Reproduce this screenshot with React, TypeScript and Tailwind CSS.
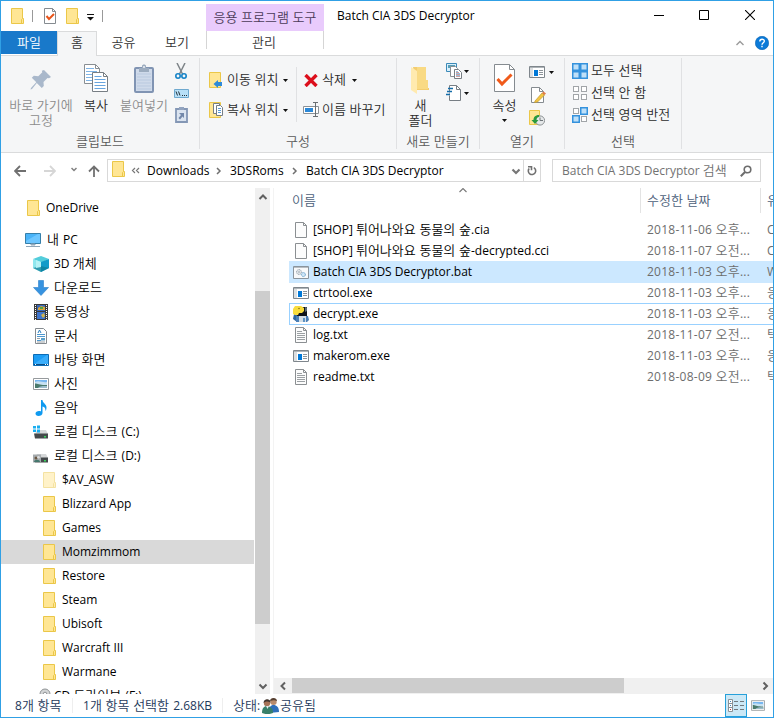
import React from "react";

type P = { className?: string; children?: React.ReactNode };

// Hangul and Latin runs are set in different families, so their sizes look even.
function T({ children, className = "" }: { children: string; className?: string }) {
  const runs = children.split(/([\uAC00-\uD7A3]+(?: [\uAC00-\uD7A3]+)*)/).filter(Boolean);
  return (
    <span className={"whitespace-pre leading-[16px] " + className}>
      {runs.map((r, i) =>
        /[\uAC00-\uD7A3]/.test(r) ? (
          <span key={i} className="font-['Noto_Sans_CJK_KR',sans-serif] text-[13px] font-[350] leading-none [word-spacing:0.8px]">{r}</span>
        ) : (
          <span key={i} className={"text-[12px] leading-none " + (r.startsWith(" ") ? "[word-spacing:1px]" : "")}>{r}</span>
        )
      )}
    </span>
  );
}

function Svg({ w, h, className = "", children }: P & { w: number; h: number }) {
  return (
    <svg width={w} height={h} viewBox={`0 0 ${w} ${h}`} className={"block shrink-0 " + className} fill="none">
      {children}
    </svg>
  );
}

const Folder = ({ className = "" }: P) => (
  <Svg w={13} h={16} className={className}>
    <path d="M.5.5h11v10h1v5H.5z" fill="#ffe694" stroke="#ebc748" />
    <path d="M10.5 15.5v-4l1-1" stroke="#ebc748" />
  </Svg>
);
const Caret = ({ className = "" }: P) => (
  <Svg w={5} h={3} className={className}><path d="M0 0h5L2.5 3z" fill="#111" /></Svg>
);
const Doc = ({ lines = false }: { lines?: boolean }) => (
  <Svg w={12} h={16}>
    <path d="M.5.5h8l3 3v12H.5z" fill="#fcfcfc" stroke="#8b8f92" />
    <path d="M8.5.5v3h3" stroke="#8b8f92" />
    {lines && <path d="M2 4.5h5M2 6.5h8M2 8.5h8M2 10.5h8M2 12.5h8" stroke="#9ba0a3" />}
  </Svg>
);
const Exe = () => (
  <Svg w={16} h={12}>
    <path d="M.5.5h15v11H.5z" fill="#fff" stroke="#7f868c" />
    <path d="M1 1.5h14" stroke="#aeb4b8" />
    <path d="M1 2h3v9H1z" fill="#dcdfe1" />
    <path d="M5 4h4v6H5z" fill="#0078d7" />
    <path d="M10 4.5h4M10 6.5h4M10 8.5h4" stroke="#8d949a" />
  </Svg>
);
const Bat = () => (
  <Svg w={16} h={13}>
    <path d="M.5.5h15v12H.5z" fill="#f8f9fa" stroke="#8a949c" />
    <path d="M1 1.5h14" stroke="#b7bdc2" />
    <circle cx="6" cy="6" r="2.4" stroke="#8b98a3" strokeDasharray="1.2 .5" />
    <circle cx="6" cy="6" r="1" stroke="#8b98a3" strokeWidth=".6" />
    <circle cx="10.4" cy="8.6" r="2" fill="#cfe6f7" stroke="#6ea4cc" strokeDasharray="1.2 .5" />
  </Svg>
);
const Python = () => (
  <Svg w={16} h={16}>
    <path d="M1 8l3 1v7l-4-3z" fill="#2e65a0" />
    <path d="M6 1h8v9H4V6z" fill="#10141a" />
    <path d="M12 1l2 .5V5l-2 1z" fill="#5c6c78" />
    <path d="M3 10h12l1 4-2 2H3z" fill="#4a80b8" />
    <path d="M6 10h7v6H6z" fill="#d3dee6" />
    <path d="M10 12h2v4h-2z" fill="#5d93c4" />
    <path d="M0 3l2-3h6l3 2v3L9 7H6L5 9H2L0 8z" fill="#f8dc3c" />
    <circle cx="6" cy="2.500" r=".8" fill="#8a7210" />
  </Svg>
);
const Picture = ({ w = 16, h = 12 }: { w?: number; h?: number }) => (
  <svg width={w} height={h} viewBox="0 0 16 12" className="block shrink-0" fill="none">
    <path d="M.5.5h15v11H.5z" fill="#fff" stroke="#969a9d" />
    <path d="M2 2h12v4H2z" fill="#76b6f0" />
    <path d="M2 4c4-2 8 1 12 0v3H2z" fill="#c7e1f2" />
    <path d="M2 5.500c3 0 5 2 12 1.500v3H2z" fill="#4a7a6c" />
    <path d="M6 9c3-1.500 5-1 8-1v2H5z" fill="#9bbccb" />
  </svg>
);

const Pin = () => (
  <Svg w={22} h={22}>
    <path d="M14 1l7 7-2 1.3-1.5-.3-4 4 .3 4-2 2-5-5L2 20l-1.500.5L1 19l5.300-5.700-4.500-4.500 2-2 4.500.5 4-4-.5-1.500z" fill="#a9b8cb" />
  </Svg>
);
const Copy = () => (
  <Svg w={25} h={28}>
    <path d="M.5.5h11l4 4v15H.5z" fill="#fff" stroke="#888e93" />
    <path d="M11.500.5v4h4" stroke="#888e93" />
    <path d="M2 4.500h8M2 7.500h11M2 10.500h11M2 13.500h11M2 16.500h11" stroke="#7eb4e6" />
    <path d="M8.500 8.500h11l4 4v15h-15z" fill="#fff" stroke="#777e84" />
    <path d="M19.500 8.500v4h4" stroke="#777e84" />
    <path d="M10.500 12.500h7M10.500 15.500h11M10.500 18.500h11M10.500 21.500h11M10.500 24.500h11" stroke="#68a5df" />
  </Svg>
);
const Paste = () => (
  <Svg w={20} h={29}>
    <rect x="1" y="4" width="18" height="24" rx="1" fill="#cfdaea" stroke="#8094b3" strokeWidth="2" />
    <path d="M3 10h14M3 13h14M3 16h14M3 19h14M3 22h14M3 25h14" stroke="#b9c9df" />
    <path d="M5 4h3V2c0-2 4-2 4 0v2h3v4H5z" fill="#9cacbf" />
    <circle cx="10" cy="3" r="1" fill="#eef2f7" />
  </Svg>
);
const Scissors = () => (
  <Svg w={12} h={17}>
    <path d="M2 0l5.500 11M10 0L4.500 11" stroke="#7e8589" strokeWidth="1.500" />
    <circle cx="3" cy="13" r="2.200" stroke="#1683c7" strokeWidth="1.600" />
    <circle cx="9" cy="13" r="2.200" stroke="#1683c7" strokeWidth="1.600" />
  </Svg>
);
const PathIcon = () => (
  <Svg w={15} h={9}>
    <path d="M.5.5h14v8H.5z" fill="#b8e0f8" stroke="#6fa9cf" />
    <path d="M2 2.500l1.500 4M4.500 2.500l1.500 4" stroke="#22303a" />
    <path d="M8 6.500h1M10 6.500h1M12 6.500h1" stroke="#22303a" />
  </Svg>
);
const PasteLink = () => (
  <Svg w={13} h={17}>
    <path d="M1 3h11v13H1z" fill="#dbe4f0" stroke="#8497b5" strokeWidth="1.800" />
    <path d="M4 1h5v3H4z" fill="#93a4bf" />
    <path d="M4 7h5v5L7.500 10.500 5 13.500 3.500 12 6 9z" fill="#7388aa" />
  </Svg>
);
const MoveTo = () => (
  <Svg w={14} h={16}>
    <path d="M.5.5h11v15H.5z" fill="#ffe694" stroke="#ebc748" />
    <path d="M13 10v4h-4v2l-4.500-4 4.500-4v2z" fill="#2f8ad8" />
  </Svg>
);
const CopyTo = () => (
  <Svg w={14} h={16}>
    <path d="M.5.500h11v15H.5z" fill="#ffe694" stroke="#ebc748" />
    <path d="M4.500 1.500h6v10h-6z" fill="#fff" stroke="#777e84" />
    <path d="M7.500 3.500h4l2 2v8h-6z" fill="#fff" stroke="#777e84" />
    <path d="M9 6.500h3M9 8.500h3M9 10.500h3" stroke="#5b9bd5" />
  </Svg>
);
const Delete = () => (
  <Svg w={14} h={13}><path d="M1.500 1l11 11M12.500 1l-11 11" stroke="#dc0f1c" strokeWidth="3.400" /></Svg>
);
const Rename = () => (
  <Svg w={16} h={16}>
    <path d="M.5 4.500h15v7H.5z" fill="#fff" stroke="#8b9196" />
    <path d="M2 6h8v4H2z" fill="#2b88d8" />
    <path d="M10 .5h5M10 14.500h5M12.500 1v13" stroke="#6a6f73" />
  </Svg>
);
const BigFolder = () => (
  <Svg w={19} h={28}>
    <path d="M2 1h13v13h1v8h2v2H6v2z" fill="#f3cd70" />
    <path d="M6 1h9v13h2v9H6z" fill="#f9da84" />
    <path d="M0 1l6 4v23l-6-4z" fill="#ffeaaf" />
  </Svg>
);
const NewItem = () => (
  <Svg w={16} h={16}>
    <path d="M.5.500h10v8H.5z" fill="#d8effc" stroke="#3c8ab8" />
    <path d="M2 2h7v3H2z" fill="#559fb8" />
    <path d="M4.500 3.500h5l2 2v8h-7z" fill="#fff" stroke="#8a9095" />
    <path d="M8.500 6.500h4l3 3v6h-7z" fill="#fff" stroke="#777e84" />
    <path d="M10 9.500h3M10 11.500h4M10 13.500h4" stroke="#d0a0a0" />
    <path d="M10 8.500h2M10 10.500h4M10 12.500h4" stroke="#98bfdc" />
  </Svg>
);
const EasyAccess = () => (
  <Svg w={15} h={16}>
    <path d="M3.500.500h7l4 4v11h-11z" fill="#fff" stroke="#777e84" />
    <path d="M10.500.500v4h4" stroke="#777e84" />
    <path d="M3 7v4" stroke="#f5f6f7" />
    <path d="M2 3.500h5M1 6.500h5M0 9.500h4" stroke="#146ca8" strokeWidth="1.300" />
  </Svg>
);
const Props = () => (
  <Svg w={21} h={28}>
    <path d="M.5.500h15l5 5v22H.5z" fill="#fff" stroke="#858b90" />
    <path d="M15.500.500v5h5" stroke="#858b90" />
    <path d="M3.500 15l4.500 5 9.500-9.500" stroke="#f05a1a" strokeWidth="3" />
  </Svg>
);
const Edit = () => (
  <Svg w={15} h={16}>
    <path d="M.5.500h8l4 4v11H.5z" fill="#fff" stroke="#858b90" />
    <path d="M8.500.500v4h4" stroke="#858b90" />
    <path d="M4 14l7-8 2.500 2-7 7-3 .5z" fill="#f4c542" stroke="#bd9a33" strokeWidth=".7" />
    <path d="M11 6l1.500-1.500 2.500 2L13.500 8z" fill="#e07b4a" />
  </Svg>
);
const History = () => (
  <Svg w={16} h={16}>
    <path d="M.5.500h10v14H.5z" fill="#ffe694" stroke="#ebc748" />
    <circle cx="11" cy="10.500" r="4.600" fill="#e5e8e9" stroke="#8d9294" />
    <path d="M11 7.500v3h3" stroke="#70777b" />
    <path d="M10 5C6 5 4.500 7.500 4.500 10H2.500L6 14l3.500-4h-2c0-2 1-3 2.500-3z" fill="#2c9a3d" />
  </Svg>
);
function Cells({ on }: { on: boolean[] }) {
  return (
    <Svg w={16} h={16}>
      {on.map((o, i) => {
        const x = (i % 2) * 8;
        const y = Math.floor(i / 2) * 8;
        return o ? (
          <rect key={i} x={x + 0.75} y={y + 0.75} width="6.500" height="6.500" fill="#bfe0f8" stroke="#3492dd" strokeWidth="1.500" />
        ) : (
          <rect key={i} x={x + 1.5} y={y + 1.5} width="5" height="5" fill="#fff" stroke="#a1a5a8" />
        );
      })}
    </Svg>
  );
}
const Chevron = ({ d, color = "#606060", sw = 2 }: { d: string; color?: string; sw?: number }) => (
  <Svg w={10} h={10}><path d={d} stroke={color} strokeWidth={sw} /></Svg>
);
const UP = "M1.500 7l3.500-3.500L8.500 7";
const DOWN = "M1.500 3.500L5 7l3.500-3.500";
const LEFT = "M7 1.500L3.500 5 7 8.500";
const RIGHT = "M3.500 1.500L7 5 3.500 8.500";

const MyPc = () => (
  <Svg w={16} h={16}>
    <path d="M.5 1.500h15v10H.5z" fill="#49b3f8" stroke="#367fa9" />
    <path d="M1 9L13 2h2v9H1z" fill="#6dc6ff" />
    <path d="M6 12h4v1H6zM1 14.500h14" fill="#9fb7c7" stroke="#8fa5b7" />
  </Svg>
);
const Cube = () => (
  <Svg w={16} h={16}>
    <path d="M8 0l8 3-8 4-8-4z" fill="#53cddb" />
    <path d="M0 3l8 3v10l-8-4z" fill="#8fe7ee" />
    <path d="M16 3L8 6v10l8-4z" fill="#129cc9" />
    <path d="M8 10l8 2-8 4-8-4z" fill="#0d7f98" opacity=".75" />
    <path d="M3 4l5 2v5l-5 1z" fill="#b5f2f5" />
  </Svg>
);
const Down = () => (
  <Svg w={16} h={16}><path d="M5.500.500h5v7h5L8 15.500.500 7.500h5z" fill="#3793e0" stroke="#2b7fc9" strokeWidth=".6" /></Svg>
);
const Film = () => (
  <Svg w={14} h={16}>
    <path d="M0 0h14v16H0z" fill="#3a3a3a" />
    <path d="M3 1h8v6H3z" fill="#3968b8" /><path d="M3 8h8v7H3z" fill="#3f75cc" />
    <path d="M4 4l3-2 4 1v3H4z" fill="#d8a53b" /><path d="M6 3h3v2H6z" fill="#4da24b" /><path d="M7 11l3-2 1 3-2 2z" fill="#d3b54b" />
    <path d="M1.500 1v15M12.500 1v15" stroke="#fff" strokeDasharray="1 1" />
  </Svg>
);
const DocIcon = () => (
  <Svg w={12} h={16}>
    <path d="M.5.500h8l3 3v12H.5z" fill="#fff" stroke="#858b90" />
    <path d="M2 6.500h8M2 8.500h8M2 12.500h4" stroke="#4d98d0" /><path d="M3 5l1.500-3L6 5" stroke="#2a7fc0" />
    <path d="M2 10.500h3M2 14h8" stroke="#9ba0a4" /><path d="M6 10h4v2.500H6z" fill="#5b9fc8" />
  </Svg>
);
const Desktop = () => (
  <Svg w={16} h={12}>
    <path d="M.5.500h15v11H.5z" fill="#1c9df5" stroke="#0d6cb5" />
    <path d="M1 10L14 1h1v9H1z" fill="#3badfa" />
    <path d="M1 10.500h14" stroke="#0a4d85" /><path d="M2 10.500h1M12 10.500h1M14 10.500h1" stroke="#fff" />
  </Svg>
);
const Music = () => (
  <Svg w={12} h={16}>
    <path d="M6 0h1.500c0 3 4 4 4 7.500 0 1.500-.5 3-1 3.500 0-3-1-4-3-4.500V13c0 2-2 3-4 3S.5 15 .5 13.500 2 11 4 11c1 0 1.500.200 2 .4z" fill="#0f9af0" />
  </Svg>
);
const Disk = ({ win = false }: { win?: boolean }) => (
  <Svg w={16} h={14}>
    <path d="M4 5h9l2 4H2z" fill="#d6d8d9" />
    <path d="M1 8.500h14v5H2z" fill="#45494b" />
    <path d="M11 11h2v1.500h-2z" fill="#36d45a" />
    {win ? (
      <path d="M0 1h3v2.500H0zM4 .5h3v3H4zM0 4.500h3V7H0zM4 4.500h3v3H4z" fill="#19aef0" />
    ) : (
      <>
        <path d="M0 5.500h8v8H0z" fill="#a5aaad" />
        <path d="M1 13c0-3 6-3 6 0z" fill="#44776d" /><circle cx="3" cy="9" r="1.500" fill="#6b5844" /><circle cx="5.500" cy="8.200" r="1.300" fill="#ddd" />
      </>
    )}
  </Svg>
);
const Cd = () => (
  <Svg w={12} h={16}>
    <circle cx="6" cy="6" r="5" fill="#d3d5d6" stroke="#909496" /><circle cx="6" cy="6" r="1.800" fill="#fff" stroke="#909496" />
  </Svg>
);
const People = () => (
  <Svg w={17} h={16}>
    <circle cx="11.500" cy="3.800" r="3.200" fill="#b88b6c" /><path d="M8 3c0-4 7-4 7 0-2-1-4-1-7 0z" fill="#564032" />
    <path d="M7 15c0-6 1.500-8 4.500-8S17 9 17 14z" fill="#2f6fba" />
    <circle cx="5" cy="5" r="3.200" fill="#a87458" /><path d="M1.500 5c0-5 7-5 7-.5-2-1-4-2-7 .5z" fill="#403630" />
    <path d="M0 15c0-5 2-7 5-7s6 2 6 7c-3 1.500-8 1.500-11 0z" fill="#38806a" />
    <path d="M4 8l1.500 3L7 8z" fill="#e5eaed" />
  </Svg>
);

function Group({ w, label, children }: { w: string; label: string; children: React.ReactNode }) {
  return (
    <div className={"relative flex shrink-0 flex-col " + w}>
      <div className="flex h-[78px] shrink-0">{children}</div>
      <div className="flex h-[16px] justify-center pr-px text-[#5a5a5a]"><T>{label}</T></div>
      <div className="absolute right-0 top-[2px] h-[91px] w-px bg-[#e0e1e3]" />
    </div>
  );
}

function Big({ w, icon, lines, className = "" }: { w: string; icon: React.ReactNode; lines: string[]; className?: string }) {
  return (
    <div className={"flex shrink-0 flex-col items-center " + w + " " + className}>
      <div className="flex h-[42px] flex-col items-center pt-[8px]">{icon}</div>
      {lines.map((l) => <T key={l} className="-mb-px">{l}</T>)}
    </div>
  );
}

const files: [string, string, string, React.ReactNode][] = [
  ["[SHOP] 튀어나와요 동물의 숲.cia", "2018-11-06 오후...", "CIA", <Doc />],
  ["[SHOP] 튀어나와요 동물의 숲-decrypted.cci", "2018-11-07 오전...", "CCI", <Doc />],
  ["Batch CIA 3DS Decryptor.bat", "2018-11-03 오후...", "Windows", <Bat />],
  ["ctrtool.exe", "2018-11-03 오후...", "응용", <Exe />],
  ["decrypt.exe", "2018-11-03 오후...", "응용", <Python />],
  ["log.txt", "2018-11-07 오전...", "텍스트", <Doc lines />],
  ["makerom.exe", "2018-11-03 오후...", "응용", <Exe />],
  ["readme.txt", "2018-08-09 오전...", "텍스트", <Doc lines />],
];

const tree: [string, React.ReactNode][] = [
  ["3D 개체", <Cube />], ["다운로드", <Down />], ["동영상", <Film />], ["문서", <DocIcon />],
  ["바탕 화면", <Desktop />], ["사진", <Picture />], ["음악", <Music />],
  ["로컬 디스크 (C:)", <Disk win />], ["로컬 디스크 (D:)", <Disk />],
];
const folders = ["$AV_ASW", "Blizzard App", "Games", "Momzimmom", "Restore", "Steam", "Ubisoft", "Warcraft III", "Warmane"];

function TitleBar() {
  return (
    <div className="flex h-[54px] shrink-0">
      <div className="flex w-[205px] shrink-0 flex-col">
        <div className="flex h-[30px] items-center pl-[10px]">
          <Folder />
          <div className="ml-[8px] h-[12px] w-px bg-[#999]" />
          <Svg w={12} h={16} className="ml-[11px]">
            <path d="M.5.500h8l3 3v12H.5z" fill="#fff" stroke="#858b90" /><path d="M8.500.500v3h3" stroke="#858b90" />
            <path d="M2.500 8l2.500 3 5-5" stroke="#e8541a" strokeWidth="2" />
          </Svg>
          <Folder className="ml-[10px]" />
          <Svg w={7} h={7} className="ml-[8px] mt-[3px]"><path d="M0 .5h7" stroke="#111" /><path d="M0 3h7L3.500 6.500z" fill="#111" /></Svg>
          <div className="ml-[8px] h-[12px] w-px bg-[#999]" />
        </div>
        <div className="flex h-[24px] text-[#333]">
          <div className="flex h-[23px] w-[56px] justify-center bg-[#1979ca] pt-[4px] text-white"><T>파일</T></div>
          <div className="z-10 -mr-px flex h-[25px] w-[40px] justify-center border border-b-0 border-[#dadbdc] bg-[#f5f6f7] pt-[3px]"><T>홈</T></div>
          <div className="flex w-[55px] justify-center pt-[4px]"><T>공유</T></div>
          <div className="flex w-[52px] justify-center pt-[4px]"><T>보기</T></div>
        </div>
      </div>
      <div className="mt-[3px] w-[118px] shrink-0">
        <div className="flex h-[27px] items-center justify-center bg-[#e9cbfc] text-[#4a3a58]"><T>응용 프로그램 도구</T></div>
        <div className="flex h-[18px] justify-center border-x border-[#d5d5d5] pr-[2px] pt-[4px] text-[#333]"><T>관리</T></div>
      </div>
      <div className="flex flex-1 flex-col">
        <div className="flex h-[30px] items-start">
          <T className="ml-[13px] mt-[7px] flex-1">Batch CIA 3DS Decryptor</T>
          <Svg w={10} h={11} className="mr-[35px] mt-[9px]"><path d="M0 5.500h10" stroke="#000" /></Svg>
          <Svg w={10} h={10} className="mr-[36px] mt-[9px]"><path d="M.5.500h9v9h-9z" stroke="#000" /></Svg>
          <Svg w={10} h={10} className="mr-[18px] mt-[9px]"><path d="M0 0l10 10M10 0L0 10" stroke="#000" strokeWidth="1.100" /></Svg>
        </div>
        <div className="flex h-[24px] items-center justify-end pr-[4px]">
          <Chevron d={UP} color="#9a9a9a" sw={1.4} />
          <Svg w={14} h={14} className="ml-[10px]"><circle cx="7" cy="7" r="6.700" fill="#0b7ad8" stroke="#0861ae" strokeWidth=".6" />
            <path d="M4.800 5.500c0-3 4.700-2.800 4.500-.2C9.200 6.800 7 6.800 7 8.700M7 9.800v1.500" stroke="#fff" strokeWidth="1.400" />
          </Svg>
        </div>
      </div>
    </div>
  );
}

function Ribbon() {
  return (
    <div className="flex h-[98px] shrink-0 border-y border-[#dadbdc] bg-[#f5f6f7] text-[#2b2b2b]">
      <Group w="w-[199px]" label="클립보드">
        <Big w="w-[80px]" className="text-[#8c8c8c]" icon={<div className="pt-[5px]"><Pin /></div>} lines={["바로 가기에", "고정"]} />
        <Big w="w-[30px]" icon={<div className="pl-px"><Copy /></div>} lines={["복사"]} />
        <Big w="w-[66px]" className="text-[#8c8c8c]" icon={<Paste />} lines={["붙여넣기"]} />
        <div className="-ml-[4px] flex w-[16px] flex-col items-center pt-[7px]">
          <Scissors />
          <div className="mt-[9px]"><PathIcon /></div>
          <div className="mt-[8px]"><PasteLink /></div>
        </div>
      </Group>
      <Group w="w-[197px]" label="구성">
        <div className="flex w-[96px] flex-col pl-[9px] pt-[16px]">
          <div className="flex h-[16px] items-center"><MoveTo /><T className="ml-[4px]">이동 위치</T><Caret className="ml-[4px]" /></div>
          <div className="mt-[14px] flex h-[16px] items-center"><CopyTo /><T className="ml-[4px]">복사 위치</T><Caret className="ml-[4px]" /></div>
        </div>
        <div className="mt-[11px] h-[55px] w-px bg-[#e0e1e3]" />
        <div className="flex flex-col pl-[7px] pt-[16px]">
          <div className="flex h-[16px] items-center"><Delete /><T className="ml-[4px]">삭제</T><Caret className="ml-[6px]" /></div>
          <div className="-ml-px mt-[14px] flex h-[16px] items-center"><Rename /><T className="ml-[3px]">이름 바꾸기</T></div>
        </div>
      </Group>
      <Group w="w-[83px]" label="새로 만들기">
        <Big w="w-[47px]" icon={<div className="pt-[2px]"><BigFolder /></div>} lines={["새", "폴더"]} />
        <div className="flex flex-col pl-[2px] pt-[7px]">
          <div className="flex items-center"><NewItem /><Caret className="ml-[2px]" /></div>
          <div className="mt-[6px] flex items-center"><EasyAccess /><Caret className="ml-[3px]" /></div>
        </div>
      </Group>
      <Group w="w-[85px]" label="열기">
        <div className="flex w-[49px] flex-col items-center">
          <Big w="w-[49px]" icon={<Props />} lines={["속성"]} />
          <Caret className="mt-[6px]" />
        </div>
        <div className="flex flex-col pt-[10px]">
          <div className="flex items-center"><Exe /><Caret className="ml-[4px]" /></div>
          <div className="ml-[2px] mt-[9px]"><Edit /></div>
          <div className="mt-[7px]"><History /></div>
        </div>
      </Group>
      <Group w="w-[117px]" label="선택">
        <div className="flex flex-col gap-[6px] pl-[7px] pt-[7px]">
          <div className="flex h-[16px] items-center gap-[3px]"><Cells on={[true, true, true, true]} /><T>모두 선택</T></div>
          <div className="flex h-[16px] items-center gap-[3px]"><Cells on={[false, false, false, false]} /><T>선택 안 함</T></div>
          <div className="flex h-[16px] items-center gap-[3px]"><Cells on={[false, true, true, false]} /><T>선택 영역 반전</T></div>
        </div>
      </Group>
    </div>
  );
}

function AddressBar() {
  return (
    <div className="flex h-[35px] shrink-0 items-start pt-[6px]">
      <div className="flex h-[23px] w-[106px] shrink-0 items-center pl-[13px]">
        <Svg w={12} h={12}><path d="M12 6H1.500M6 1L1 6l5 5" stroke="#707070" strokeWidth="1.800" /></Svg>
        <Svg w={12} h={12} className="ml-[18px]"><path d="M0 6h10.500M6 1l5 5-5 5" stroke="#d6d6d6" strokeWidth="1.800" /></Svg>
        <Svg w={6} h={5} className="-mt-[2px] ml-[15px]"><path d="M.5 1L3 3.500 5.500 1" stroke="#808080" strokeWidth="1.500" /></Svg>
        <Svg w={12} h={12} className="ml-[11px]"><path d="M6 12V1.500M1 6.500l5-5 5 5" stroke="#707070" strokeWidth="1.800" /></Svg>
      </div>
      <div className="flex h-[23px] w-[434px] shrink-0 items-center border border-[#d9d9d9] pl-[4px]">
        <Folder className="-mt-[3px]" />
        <Svg w={9} h={7} className="ml-[6px]"><path d="M4 1L1.500 3.500 4 6M8 1L5.500 3.500 8 6" stroke="#777" strokeWidth="1.200" /></Svg>
        <T className="ml-[7px] w-[61px]">Downloads</T>
        <div className="ml-[7px]"><Svg w={8} h={8}><path d="M2 1l3 3-3 3" stroke="#707070" strokeWidth="1.500" /></Svg></div>
        <T className="ml-[7px] w-[54px]">3DSRoms</T>
        <div className="ml-[7px]"><Svg w={8} h={8}><path d="M2 1l3 3-3 3" stroke="#707070" strokeWidth="1.500" /></Svg></div>
        <T className="ml-[7px] flex-1">Batch CIA 3DS Decryptor</T>
        <Chevron d={DOWN} color="#777" sw={2.2} />
        <div className="ml-[2px] flex h-full w-[17px] items-center justify-center border-l border-[#d9d9d9]">
          <Svg w={10} h={11}><path d="M6.800 2.600A3.700 3.700 0 1 1 2.200 3.400M1 1.800h3.500v3.400" stroke="#707070" strokeWidth="1.600" /></Svg>
        </div>
      </div>
      <div className="ml-[11px] flex h-[23px] w-[209px] items-center border border-[#d9d9d9] pl-[9px] text-[#727272]">
        <T className="flex-1">Batch CIA 3DS Decryptor 검색</T>
        <Svg w={12} h={12} className="mr-[8px]"><circle cx="7.500" cy="4.500" r="3.300" stroke="#6d6d6d" strokeWidth="1.600" /><path d="M5 7L.8 11.200" stroke="#6d6d6d" strokeWidth="2" /></Svg>
      </div>
    </div>
  );
}

export default function App() {
  return (
    <div className="flex h-[718px] w-[774px] flex-col overflow-hidden border border-[#30a0e5] bg-white font-['Open_Sans','Noto_Sans_CJK_KR',sans-serif] text-[12px] leading-[16px] text-black">
      <TitleBar />
      <Ribbon />
      <AddressBar />
      <div className="flex h-[506px] shrink-0">
        <div className="flex w-[253px] shrink-0 flex-col overflow-hidden pt-[8px]">
          <div className="flex h-[24px] shrink-0 items-center pl-[26px]"><Folder /><T className="ml-[6px]">OneDrive</T></div>
          <div className="mt-[8px] flex h-[24px] shrink-0 items-center pl-[24px]"><MyPc /><T className="ml-[6px]">내 PC</T></div>
          {tree.map(([name, icon]) => (
            <div key={name} className="flex h-[24px] shrink-0 items-center pl-[32px]">
              <div className="flex w-[16px] justify-center">{icon}</div><T className="ml-[5px]">{name}</T>
            </div>
          ))}
          {folders.map((name) => (
            <div key={name} className={"flex h-[24px] shrink-0 items-center pl-[42px] " + (name === "Momzimmom" ? "bg-[#d9d9d9]" : "")}>
              <Folder className={name === "$AV_ASW" ? "opacity-50" : ""} /><T className="ml-[6px]">{name}</T>
            </div>
          ))}
          <div className="flex h-[24px] shrink-0 items-center pl-[38px]"><Cd /><T className="ml-[3px]">CD 드라이브 (F:)</T></div>
        </div>
        <div className="ml-px flex w-[15px] shrink-0 flex-col items-center bg-[#f0f0f0]">
          <div className="flex h-[103px] pt-[4px]"><Chevron d={UP} /></div>
          <div className="h-[333px] w-full bg-[#cdcdcd]" />
          <div className="flex flex-1 items-end pb-[3px]"><Chevron d={DOWN} /></div>
        </div>
        <div className="ml-[3px] flex w-[500px] shrink-0 flex-col overflow-hidden border-l border-[#f3f3f3]">
          <div className="flex h-[25px] shrink-0 text-[#4c607a]">
            <div className="flex w-[367px] shrink-0 border-r border-[#e3e3e3] pl-[18px] pt-[5px]">
              <T className="w-[166px]">이름</T>
              <div className="-mt-[8px]"><Chevron d={UP} color="#777" sw={1.1} /></div>
            </div>
            <div className="w-[120px] shrink-0 border-r border-[#e3e3e3] pl-[6px] pt-[5px]"><T>수정한 날짜</T></div>
            <div className="shrink-0 pl-[6px] pt-[5px]"><T>유형</T></div>
          </div>
          <div className="ml-[15px] mt-[6px] flex w-[560px] flex-col">
            {files.map(([name, date, kind, icon], i) => (
              <div key={name} className={"flex shrink-0 items-center border " + (i === 2 ? "-mb-px h-[22px] border-[#cce8ff] bg-[#cce8ff]" : i === 4 ? "-mb-px h-[22px] border-[#99d1ff]" : "h-[21px] border-transparent")}>
                <div className="ml-[3px] flex w-[16px] justify-center">{icon}</div>
                <T className="ml-[4px] w-[334px] shrink-0">{name}</T>
                <T className="w-[120px] shrink-0 tracking-[0.25px] text-[#6d6d6d]">{date}</T>
                <T className="text-[#6d6d6d]">{kind}</T>
              </div>
            ))}
          </div>
          <div className="mt-auto flex h-[16px] shrink-0 items-center bg-[#f0f0f0]">
            <div className="flex w-[18px] justify-center"><Chevron d={LEFT} /></div>
            <div className="h-[15px] w-[332px] self-start bg-[#cdcdcd]" />
            <div className="ml-auto mr-[3px]"><Chevron d={RIGHT} /></div>
          </div>
        </div>
      </div>
      <div className="flex h-[23px] shrink-0 items-center text-[#1e395b]">
        <T className="ml-[14px] w-[57px]">8개 항목</T>
        <div className="h-[15px] w-px bg-[#eee]" />
        <T className="ml-[10px] w-[139px]">1개 항목 선택함 2.68KB</T>
        <div className="h-[15px] w-px bg-[#eee]" />
        <T className="ml-[10px] w-[29px]">상태:</T>
        <People />
        <T className="ml-[1px]">공유됨</T>
        <div className="ml-auto flex h-[23px] w-[22px] items-center justify-center border border-[#26a0da] bg-[#cbe8f6]">
          <Svg w={16} h={13}>
            <path d="M.5.500h4v12h-4zM.5 4.500h4M.5 8.500h4" fill="#fff" stroke="#8b9196" />
            <path d="M2 2.500h1M2 6.500h1" stroke="#3d85b8" /><path d="M2 10.500h1" stroke="#b43b3b" />
            <path d="M6 2.500h4M12 2.500h4M6 6.500h4M12 6.500h4M6 10.500h4M12 10.500h4" stroke="#71797e" />
          </Svg>
        </div>
        <div className="ml-[4px] mr-[8px]"><Picture w={14} h={11} /></div>
      </div>
    </div>
  );
}
